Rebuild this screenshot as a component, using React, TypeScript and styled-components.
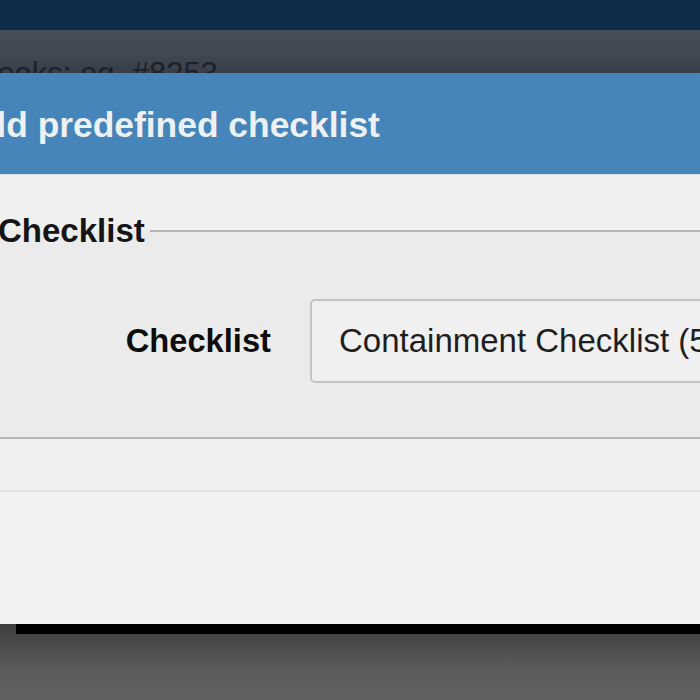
import React from 'react';
import styled, { createGlobalStyle } from 'styled-components';

const GlobalStyle = createGlobalStyle`
    html, body {
        margin: 0;
        padding: 0;
        height: 100%;
        overflow: hidden;
        background: #5f5f5f;
    }
    #root {
        height: 100%;
    }
    * {
        box-sizing: border-box;
    }
`;

const Page = styled.div`
    display: flex;
    flex-direction: column;
    width: 700px;
    height: 700px;
    overflow: hidden;
    font-family: "Liberation Sans", Arial, Helvetica, sans-serif;
`;

const TopBar = styled.div`
    height: 30px;
    flex-shrink: 0;
    background: #0f2d48;
`;

const SearchBar = styled.div`
    height: 43px;
    flex-shrink: 0;
    overflow: hidden;
    padding-top: 26px;
    background: linear-gradient(#454f57, #3f4750 60%, #373e47);
`;

const Placeholder = styled.div`
    margin-left: -20px;
    font-size: 31px;
    line-height: 36px;
    color: #1b2127;
    white-space: nowrap;
`;

const Modal = styled.div`
    flex-shrink: 0;
    width: 900px;
    margin-left: -56px;
    background: #f0f0f0;
`;

const Header = styled.div`
    height: 102px;
    padding: 32px 0 0 15px;
    background: #4585ba;
    border-bottom: 1px solid #d9dee3;
`;

const Title = styled.h3`
    margin: 0;
    font-size: 35.4px;
    line-height: 40px;
    font-weight: bold;
    color: #eef1f4;
    white-space: nowrap;
`;

const Body = styled.div`
    padding: 36px 15px 51px;
`;

const Fieldset = styled.fieldset`
    margin: 0;
    padding: 48px 0 54px;
    min-width: 0;
    background: #ebebeb;
    border: 2px solid #b5b5b5;
`;

const Legend = styled.legend`
    margin-left: 37px;
    padding: 0 5px 0 0;
    font-size: 33px;
    line-height: 40px;
    font-weight: bold;
    color: #151515;
`;

const FormRow = styled.div`
    display: grid;
    grid-template-columns: 310px 1fr;
    column-gap: 39px;
    align-items: center;
`;

const Label = styled.label`
    text-align: right;
    font-size: 32.7px;
    font-weight: bold;
    color: #0d0d0d;
`;

const Select = styled.div`
    height: 84px;
    display: flex;
    align-items: center;
    padding-left: 27px;
    background: #f0f0f0;
    border: 2px solid #c4c4c4;
    border-radius: 5px;
    font-size: 33px;
    color: #1e1e1e;
    white-space: nowrap;
    overflow: hidden;
`;

const Footer = styled.div`
    height: 134px;
    background: #f1f1f1;
    border-top: 2px solid #e2e2e2;
`;

const Backdrop = styled.div`
    flex: 1;
    background: linear-gradient(#3f3f3f, #4a4a4a 20px, #5b5b5b 45px, #616161 70px);
`;

const ShadowStrip = styled.div`
    height: 10px;
    margin-left: 16px;
    background: #000;
`;

const App: React.FC = () => {
    return (
        <>
            <GlobalStyle />
            <Page>
                <TopBar />
                <SearchBar>
                    <Placeholder>books: eg. #8253</Placeholder>
                </SearchBar>
                <Modal>
                    <Header>
                        <Title>Add predefined checklist</Title>
                    </Header>
                    <Body>
                        <Fieldset>
                            <Legend>Checklist</Legend>
                            <FormRow>
                                <Label>Checklist</Label>
                                <Select>Containment Checklist (5 items)</Select>
                            </FormRow>
                        </Fieldset>
                    </Body>
                    <Footer />
                </Modal>
                <Backdrop>
                    <ShadowStrip />
                </Backdrop>
            </Page>
        </>
    );
};

export default App;
